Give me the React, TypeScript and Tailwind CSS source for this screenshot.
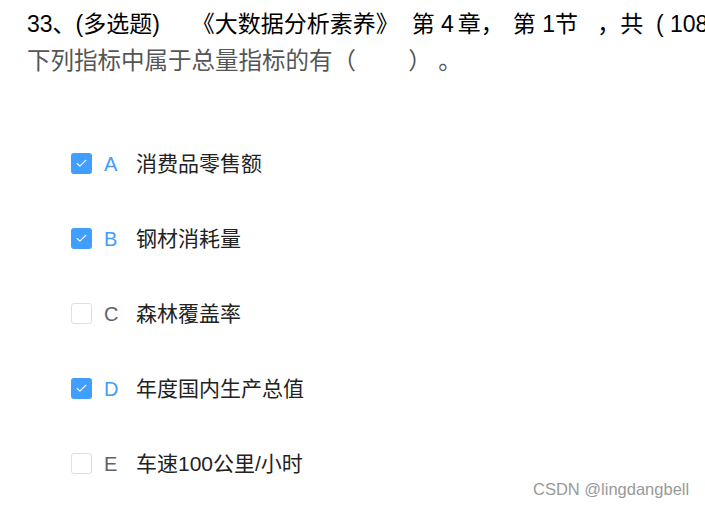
import { Check } from "lucide-react";

const options = [
  { key: "A", text: "消费品零售额", checked: true },
  { key: "B", text: "钢材消耗量", checked: true },
  { key: "C", text: "森林覆盖率", checked: false },
  { key: "D", text: "年度国内生产总值", checked: true },
  { key: "E", text: "车速100公里/小时", checked: false },
];

const font = {
  fontFamily: '"Liberation Sans", Arial, "Noto Sans CJK SC", sans-serif',
};

export default function App() {
  return (
    <div className="relative w-[705px] h-[506px] overflow-hidden bg-white" style={font}>
      <div className="pl-[27px] pt-[6px]">
        <div className="whitespace-pre text-[23px] leading-[37px] text-black">
          {"33、(多选题)     《大数据分析素养》  第 4"}
          <span className="ml-[4px]">{"章，"}</span>
          <span className="ml-[9px]">{"第 1节   ，共  ( 108 题 )"}</span>
        </div>
        <div className="whitespace-pre text-[23.5px] leading-[37px] text-[#555]">
          {"下列指标中属于总量指标的有（        ） 。"}
        </div>
      </div>

      <div className="pl-[71px] pt-[73px] flex flex-col gap-[54px]">
        {options.map((o) => (
          <div key={o.key} className="flex items-center h-[21px]">
            {o.checked ? (
              <span className="w-[21px] h-[21px] rounded-[3px] bg-[#409eff] flex items-center justify-center">
                <Check className="w-[13px] h-[13px] text-white" strokeWidth={2} />
              </span>
            ) : (
              <span className="w-[21px] h-[21px] rounded-[3px] border border-[#dcdfe6] bg-white" />
            )}
            <span
              className={
                "ml-[12px] w-[32px] text-[20px] " +
                (o.checked ? "text-[#409eff]" : "text-[#606266]")
              }
            >
              {o.key}
            </span>
            <span className="text-[21px] text-[#222]">{o.text}</span>
          </div>
        ))}
      </div>

      <div className="absolute left-[533px] top-[477px] text-[16.5px] text-[#999] whitespace-nowrap">
        CSDN @lingdangbell
      </div>
    </div>
  );
}
